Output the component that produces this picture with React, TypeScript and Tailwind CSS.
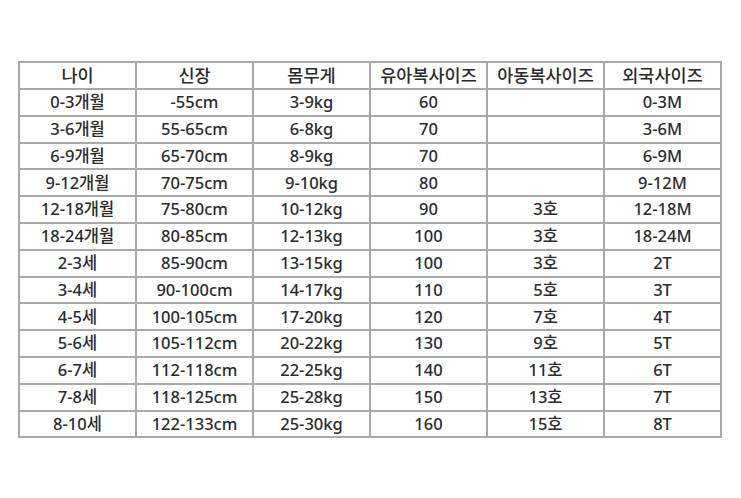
import React from 'react';

const header = ['나이', '신장', '몸무게', '유아복사이즈', '아동복사이즈', '외국사이즈'];

const rows: string[][] = [
  ['0-3개월', '-55cm', '3-9kg', '60', '', '0-3M'],
  ['3-6개월', '55-65cm', '6-8kg', '70', '', '3-6M'],
  ['6-9개월', '65-70cm', '8-9kg', '70', '', '6-9M'],
  ['9-12개월', '70-75cm', '9-10kg', '80', '', '9-12M'],
  ['12-18개월', '75-80cm', '10-12kg', '90', '3호', '12-18M'],
  ['18-24개월', '80-85cm', '12-13kg', '100', '3호', '18-24M'],
  ['2-3세', '85-90cm', '13-15kg', '100', '3호', '2T'],
  ['3-4세', '90-100cm', '14-17kg', '110', '5호', '3T'],
  ['4-5세', '100-105cm', '17-20kg', '120', '7호', '4T'],
  ['5-6세', '105-112cm', '20-22kg', '130', '9호', '5T'],
  ['6-7세', '112-118cm', '22-25kg', '140', '11호', '6T'],
  ['7-8세', '118-125cm', '25-28kg', '150', '13호', '7T'],
  ['8-10세', '122-133cm', '25-30kg', '160', '15호', '8T'],
];

export default function App() {
  return (
    <div
      className="w-[741px] h-[498px] bg-white pt-[61px] pl-[18px]"
      style={{ fontFamily: '"Noto Sans", "Noto Sans CJK KR", sans-serif' }}
    >
      <table className="w-[704px] table-fixed border-collapse border-2 border-[#a9a9a9] text-[16.5px] text-[#2b2b2b]">
        <thead>
          <tr className="h-[27px]">
            {header.map((h) => (
              <th key={h} className="border-2 border-[#a9a9a9] p-0 text-center text-[17.5px] font-medium leading-none">
                {h}
              </th>
            ))}
          </tr>
        </thead>
        <tbody>
          {rows.map((r, i) => (
            <tr key={i} className="h-[26.8px]">
              {r.map((c, j) => (
                <td key={j} className="border-2 border-[#a9a9a9] p-0 text-center font-medium leading-none">
                  {c}
                </td>
              ))}
            </tr>
          ))}
        </tbody>
      </table>
    </div>
  );
}
